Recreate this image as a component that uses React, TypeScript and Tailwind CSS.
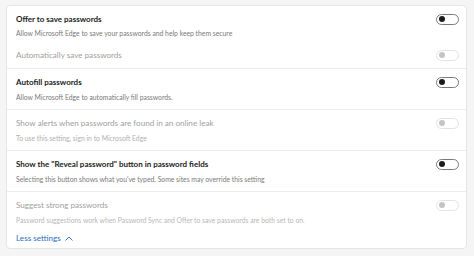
import React from 'react';

type Row = {
  title: string;
  desc?: string;
  disabled?: boolean;
};

function Toggle({ disabled }: { disabled?: boolean }) {
  return (
    <div
      className={
        'flex h-[11px] w-[23px] shrink-0 items-center rounded-full border pl-[2px] ' +
        (disabled ? 'border-[#e3e3e3]' : 'border-[#7a7a7a]')
      }
    >
      <div
        className={
          'h-[6px] w-[6px] rounded-full ' + (disabled ? 'bg-[#c4c4c4]' : 'bg-[#1b1b1b]')
        }
      />
    </div>
  );
}

const rows: Row[] = [
  {
    title: 'Autofill passwords',
    desc: 'Allow Microsoft Edge to automatically fill passwords.',
  },
  {
    title: 'Show alerts when passwords are found in an online leak',
    desc: 'To use this setting, sign in to Microsoft Edge',
    disabled: true,
  },
  {
    title: 'Show the "Reveal password" button in password fields',
    desc: "Selecting this button shows what you've typed. Some sites may override this setting",
  },
];

export default function App() {
  return (
    <div
      className="h-[256px] w-[474px] overflow-hidden bg-[#f5f5f5] pl-[6px] pr-[7px] pt-[5px]"
      style={{ fontFamily: 'Lato, "Noto Sans", sans-serif' }}
    >
      <div className="h-[244px] rounded-[4px] border border-[#e5e5e5] bg-white">
        <div className="border-b border-[#ececec] pb-[7px] pl-[9px] pr-[7px] pt-[7px]">
          <div className="flex items-center justify-between">
            <div className="text-[8px] font-bold leading-[12px] text-[#1b1b1b]">
              Offer to save passwords
            </div>
            <Toggle />
          </div>
          <div className="mt-[2px] text-[6.8px] leading-[12px] text-[#7a7a7a]">
            Allow Microsoft Edge to save your passwords and help keep them secure
          </div>
          <div className="mt-[10px] flex items-center justify-between">
            <div className="text-[8.1px] leading-[12px] text-[#a0a0a0]">
              Automatically save passwords
            </div>
            <Toggle disabled />
          </div>
        </div>

        {rows.map((r) => (
          <div
            key={r.title}
            className="border-b border-[#ececec] pb-[6px] pl-[9px] pr-[7px] pt-[7px]"
          >
            <div className="flex items-center justify-between">
              <div
                className={
                  'leading-[12px] ' +
                  (r.disabled ? 'text-[8.1px] text-[#a0a0a0]' : 'text-[8px] font-bold text-[#1b1b1b]')
                }
              >
                {r.title}
              </div>
              <Toggle disabled={r.disabled} />
            </div>
            <div
              className={
                'mt-[3px] text-[6.8px] leading-[12px] ' +
                (r.disabled ? 'text-[#b0b0b0]' : 'text-[#7a7a7a]')
              }
            >
              {r.desc}
            </div>
          </div>
        ))}

        <div className="pl-[9px] pr-[7px] pt-[7px]">
          <div className="flex items-center justify-between">
            <div className="text-[8.1px] leading-[12px] text-[#a0a0a0]">
              Suggest strong passwords
            </div>
            <Toggle disabled />
          </div>
          <div className="mt-[3px] text-[6.8px] leading-[12px] text-[#b8b8b8]">
            Password suggestions work when Password Sync and Offer to save passwords are both set to on.
          </div>
          <div className="mt-[6px] flex items-center gap-[4px] text-[8.1px] leading-[12px] text-[#2c6fbd]">
            <span>Less settings</span>
            <svg width="8" height="5" viewBox="0 0 8 5" fill="none">
              <path d="M0.5 4.5 L4 1 L7.5 4.5" stroke="#2c6fbd" strokeWidth="0.9" />
            </svg>
          </div>
        </div>
      </div>
    </div>
  );
}
